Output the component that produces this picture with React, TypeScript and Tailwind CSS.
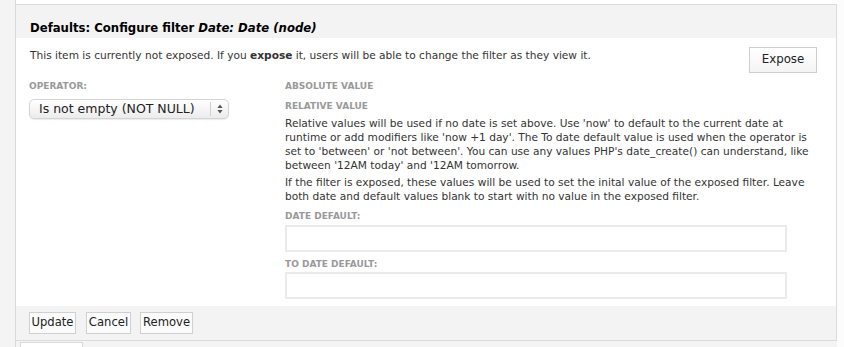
function Arrows() {
  return (
    <svg width="6" height="10" viewBox="0 0 6 10" className="fill-[#555]">
      <path d="M3 0.5 L5.6 4 H0.4 Z" />
      <path d="M3 9.5 L5.6 6 H0.4 Z" />
    </svg>
  )
}

function Label({ children }: { children: React.ReactNode }) {
  return <div className="text-[9px] leading-[12px] font-bold uppercase text-[#999]">{children}</div>
}

export default function App() {
  return (
    <div className="w-[844px] h-[347px] flex bg-[#fcfcfc] overflow-hidden text-[#333] font-['DejaVu_Sans',sans-serif]">
      <div className="w-[16px] shrink-0 bg-[#f4f4f4] border-r border-[#d9d9d9]" />

      <div className="w-[821px] shrink-0 flex flex-col">
        <div className="h-[4px] bg-white" />
        <div className="border-t border-r border-[#d9dcdf] flex flex-col">
          <div className="h-[33px] bg-[#f3f3f3] pt-[15px] pl-[14px]">
            <h1 className="text-[11.7px] leading-[16px] font-bold text-black">
              Defaults: Configure filter <em>Date: Date (node)</em>
            </h1>
          </div>

          <div className="bg-white pl-[13px] pr-[18px] pt-[9px] pb-[7px]">
            <div className="flex justify-between items-start">
              <p className="ml-[1px] mt-[1px] text-[10.6px] leading-[14px]">
                This item is currently not exposed. If you <strong>expose</strong> it, users will be able to change the filter as they view it.
              </p>
              <button className="mr-[1px] w-[68px] h-[26px] border border-[#cfcfcf] bg-gradient-to-b from-white to-[#f4f4f4] text-[11.8px] text-[#222]">
                Expose
              </button>
            </div>

            <div className="flex mt-[7px]">
              <div className="w-[256px] shrink-0">
                <Label>Operator:</Label>
                <div className="mt-[7px] w-[200px] h-[20px] flex items-center rounded-[5px] border border-[#d4d4d4] bg-gradient-to-b from-white to-[#ececec] shadow-[0_1px_1px_rgba(0,0,0,0.08)]">
                  <span className="pl-[9px] flex-1 text-[12.5px] leading-[16px] text-[#222]">Is not empty (NOT NULL)</span>
                  <span className="w-px h-[14px] bg-[#d0d0d0]" />
                  <span className="w-[17px] flex justify-center">
                    <Arrows />
                  </span>
                </div>
              </div>

              <div className="w-[532px] shrink-0">
                <Label>Absolute value</Label>
                <div className="mt-[8px]">
                  <Label>Relative value</Label>
                </div>
                <div className="mt-[3.7px] text-[10.6px] leading-[14px]">
                  Relative values will be used if no date is set above. Use 'now' to default to the current date at runtime or add modifiers like 'now +1 day'. The To date default value is used when the operator is set to 'between' or 'not between'. You can use any values PHP's date_create() can understand, like between '12AM today' and '12AM tomorrow.
                </div>
                <div className="mt-[3px] text-[10.6px] leading-[14px]">
                  If the filter is exposed, these values will be used to set the inital value of the exposed filter. Leave both date and default values blank to start with no value in the exposed filter.
                </div>
                <div className="mt-[7px]">
                  <Label>Date default:</Label>
                </div>
                <div className="mt-[3px] w-[502px] h-[27px] border-2 border-[#ebebeb] bg-white" />
                <div className="mt-[6px]">
                  <Label>To date default:</Label>
                </div>
                <div className="mt-[2px] w-[502px] h-[27px] border-2 border-[#ebebeb] bg-white" />
              </div>
            </div>
          </div>

          <div className="h-[35px] bg-[#f3f3f3] border-b border-[#d9dcdf] pl-[13px] pt-[6px] flex">
            <button className="w-[47px] h-[22px] border border-[#d0d0d0] bg-[#fbfbfb] text-[11.6px] text-[#222]">Update</button>
            <button className="ml-[10px] w-[45px] h-[22px] border border-[#d0d0d0] bg-[#fbfbfb] text-[11.6px] text-[#222]">Cancel</button>
            <button className="ml-[9px] w-[53px] h-[22px] border border-[#d0d0d0] bg-[#fbfbfb] text-[11.6px] text-[#222]">Remove</button>
          </div>
        </div>
        <div className="flex-1 bg-[#f4f4f4] pt-[1px]">
          <div className="ml-[4px] w-[63px] h-full bg-white border-t border-x border-[#d9d9d9]" />
        </div>
      </div>
    </div>
  )
}
